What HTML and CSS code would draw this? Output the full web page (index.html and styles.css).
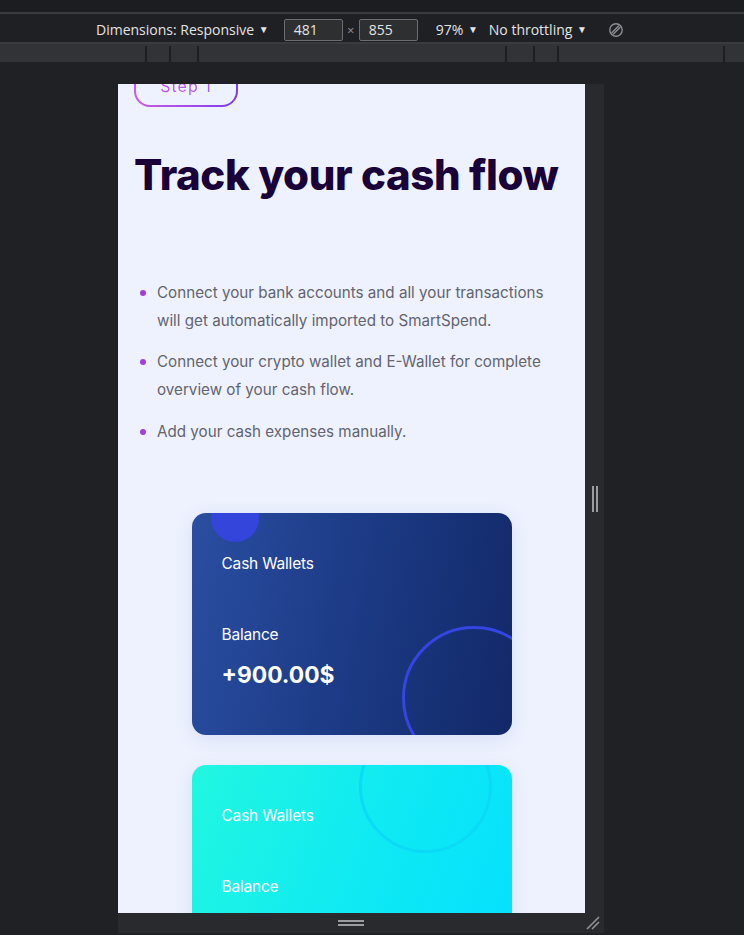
FILE: index.html
```html
<!DOCTYPE html>
<html lang="en">
<head>
<meta charset="utf-8">
<title>Track your cash flow</title>
<link rel="stylesheet" href="styles.css">
</head>
<body>
<div class="topstrip"></div>
<div class="toolbar">
  <span class="tb-item tb-dim">Dimensions: Responsive <span class="caret">▼</span></span>
  <span class="tb-input">481</span>
  <span class="tb-x">×</span>
  <span class="tb-input">855</span>
  <span class="tb-item tb-zoom">97% <span class="caret">▼</span></span>
  <span class="tb-item tb-throt">No throttling <span class="caret">▼</span></span>
  <svg class="tb-icon" width="16" height="16" viewBox="0 0 16 16"><circle cx="8" cy="8" r="6.2" fill="none" stroke="#8a8d91" stroke-width="1.4"/><path d="M3.6 11 L11 3.6 M5 12.4 L12.4 5" stroke="#8a8d91" stroke-width="1.4" fill="none"/></svg>
</div>
<div class="ruler">
  <span class="rseg s1"></span><span class="rseg s2"></span><span class="rseg s3"></span><span class="rseg s4"></span><span class="rseg s5"></span><span class="rseg s6"></span><span class="rseg s7"></span><span class="rseg s8"></span>
</div>
<div class="stage">
  <div class="device">
    <div class="viewport">
      <div class="page">
        <div class="step"><span class="step-text">Step 1</span></div>
        <h1 class="title">Track your cash flow</h1>
        <ul class="points">
          <li>Connect your bank accounts and all your transactions will get automatically imported to SmartSpend.</li>
          <li>Connect your crypto wallet and E-Wallet for complete overview of your cash flow.</li>
          <li>Add your cash expenses manually.</li>
        </ul>
        <div class="cards">
          <div class="card card-dark">
            <span class="blob"></span>
            <span class="ring ring-dark"></span>
            <div class="card-label">Cash Wallets</div>
            <div class="card-bal">Balance</div>
            <div class="card-amt">+900.00$</div>
          </div>
          <div class="card card-cyan">
            <span class="ring ring-cyan"></span>
            <div class="card-label">Cash Wallets</div>
            <div class="card-bal">Balance</div>
            <div class="card-amt">+900.00$</div>
          </div>
        </div>
      </div>
    </div>
    <div class="vbar"><span class="vgrip"></span></div>
    <div class="hbar">
      <span class="hgrip"></span>
      <svg class="corner" width="14" height="14" viewBox="0 0 14 14"><path d="M1 13 L13 1 M6 13 L13 6" stroke="#8f9296" stroke-width="1.6" fill="none"/></svg>
    </div>
  </div>
</div>
</body>
</html>
```
FILE: styles.css
```css
* { box-sizing: border-box; }
html, body { margin: 0; padding: 0; }
body {
  width: 744px;
  height: 935px;
  overflow: hidden;
  background: #202124;
  font-family: "Open Sans", "Noto Sans", sans-serif;
}
.topstrip {
  height: 14px;
  background: #1c1d20;
  border-bottom: 2px solid #3a3b3f;
}
.toolbar {
  height: 30px;
  background: #1f2023;
  border-bottom: 2px solid #3a3b3f;
  display: flex;
  align-items: center;
  padding-left: 96px;
  padding-top: 3px;
  color: #e3e3e3;
  font-size: 14px;
}
.tb-item { white-space: nowrap; }
.caret { font-size: 10px; vertical-align: 2px; margin-left: 1px; }
.tb-dim { margin-right: 15px; }
.tb-input {
  width: 59px;
  height: 22px;
  border: 1px solid #6b6d70;
  border-radius: 2px;
  background: #2e2f31;
  padding-left: 9px;
  line-height: 20px;
}
.tb-x { color: #8d8f93; width: 16px; text-align: center; font-size: 13px; }
.tb-zoom { margin-left: 18px; margin-right: 11px; }
.tb-icon { margin-left: 21px; }
.ruler {
  height: 18px;
  background: #323336;
  display: flex;
  padding-top: 2px;
}
.rseg { height: 16px; border-right: 2px solid #1d1e20; }
.s1 { width: 147px; } .s2 { width: 24px; } .s3 { width: 28px; } .s4 { width: 308px; }
.s5 { width: 28px; } .s6 { width: 24px; } .s7 { width: 166px; } .s8 { flex: 1; border-right: 0; }
.stage { padding: 22px 0 0 118px; }
.device {
  display: grid;
  grid-template-columns: 467px 19px;
  grid-template-rows: 829px 20px;
}
.viewport {
  background: #eef2fe;
  overflow: hidden;
  font-family: "Inter", "Roboto", sans-serif;
}
.page { padding: 0 16px; margin-top: -19px; }
.step {
  display: inline-flex;
  align-items: center;
  justify-content: center;
  width: 104px;
  height: 42px;
  border-radius: 16px;
  border: 2px solid transparent;
  background: linear-gradient(#eef2fe, #eef2fe) padding-box, linear-gradient(90deg, #cc5ae6, #7d3de6) border-box;
}
.step-text {
  font-family: "Inter", sans-serif;
  font-size: 16px;
  letter-spacing: 1px;
  background: linear-gradient(90deg, #c855e4, #9a62ee);
  -webkit-background-clip: text;
  background-clip: text;
  color: transparent;
}
.title {
  margin: 43px 0 0;
  font-family: "Inter", sans-serif;
  font-weight: 800;
  font-size: 42px;
  line-height: 50px;
  letter-spacing: -0.4px;
  color: #19013a;
}
.points {
  margin: 79px 0 0;
  padding: 0 0 0 23px;
  list-style: none;
  color: #62646f;
  font-family: "Inter", sans-serif;
  font-size: 15.2px;
  line-height: 28px;
  width: 420px;
}
.points li { position: relative; margin-bottom: 13px; }
.points li:nth-child(2) { margin-bottom: 14px; }
.points li::before {
  content: "";
  position: absolute;
  left: -17px;
  top: 11px;
  width: 6px;
  height: 6px;
  border-radius: 50%;
  background: #a040d6;
}
.cards {
  margin-top: 67px;
  display: flex;
  flex-direction: column;
  align-items: center;
  gap: 30px;
}
.card {
  position: relative;
  overflow: hidden;
  width: 320px;
  height: 222px;
  border-radius: 14px;
  padding: 41px 30px 0;
  color: #ffffff;
  box-shadow: 0 4px 18px rgba(70, 90, 210, 0.13);
}
.card-dark { background: linear-gradient(100deg, #2a4ea1 0%, #1c3a85 50%, #122968 100%); }
.card-cyan { background: linear-gradient(110deg, #22f7e0 0%, #10eaf2 50%, #04e0ff 100%); }
.blob {
  position: absolute;
  left: 19px;
  top: -19px;
  width: 48px;
  height: 48px;
  border-radius: 50%;
  background: #3445dc;
}
.ring { position: absolute; border-radius: 50%; }
.ring-dark { left: 210px; top: 113px; width: 144px; height: 144px; border: 3px solid #3445e2; }
.ring-cyan { left: 167px; top: -45px; width: 133px; height: 133px; border: 3px solid #0bdaf7; }
.card-label, .card-bal { position: relative; font-family: "Inter", sans-serif; font-size: 15.5px; line-height: 20px; letter-spacing: -0.2px; }
.card-bal { margin-top: 51px; }
.card-amt { position: relative; margin-top: 16px; font-family: "Inter", sans-serif; font-weight: 700; font-size: 22.8px; line-height: 28px; }
.vbar {
  background: #292a2d;
  display: flex;
  justify-content: center;
  padding-top: 402px;
}
.vgrip {
  width: 6px;
  height: 26px;
  border-left: 2px solid #9a9ca0;
  border-right: 2px solid #9a9ca0;
}
.hbar {
  grid-column: 1 / 3;
  background: #292a2d;
  display: flex;
  align-items: center;
  padding-left: 220px;
  padding-right: 4px;
}
.hgrip {
  width: 26px;
  height: 6px;
  border-top: 2px solid #9a9ca0;
  border-bottom: 2px solid #9a9ca0;
}
.corner { margin-left: auto; }
```
